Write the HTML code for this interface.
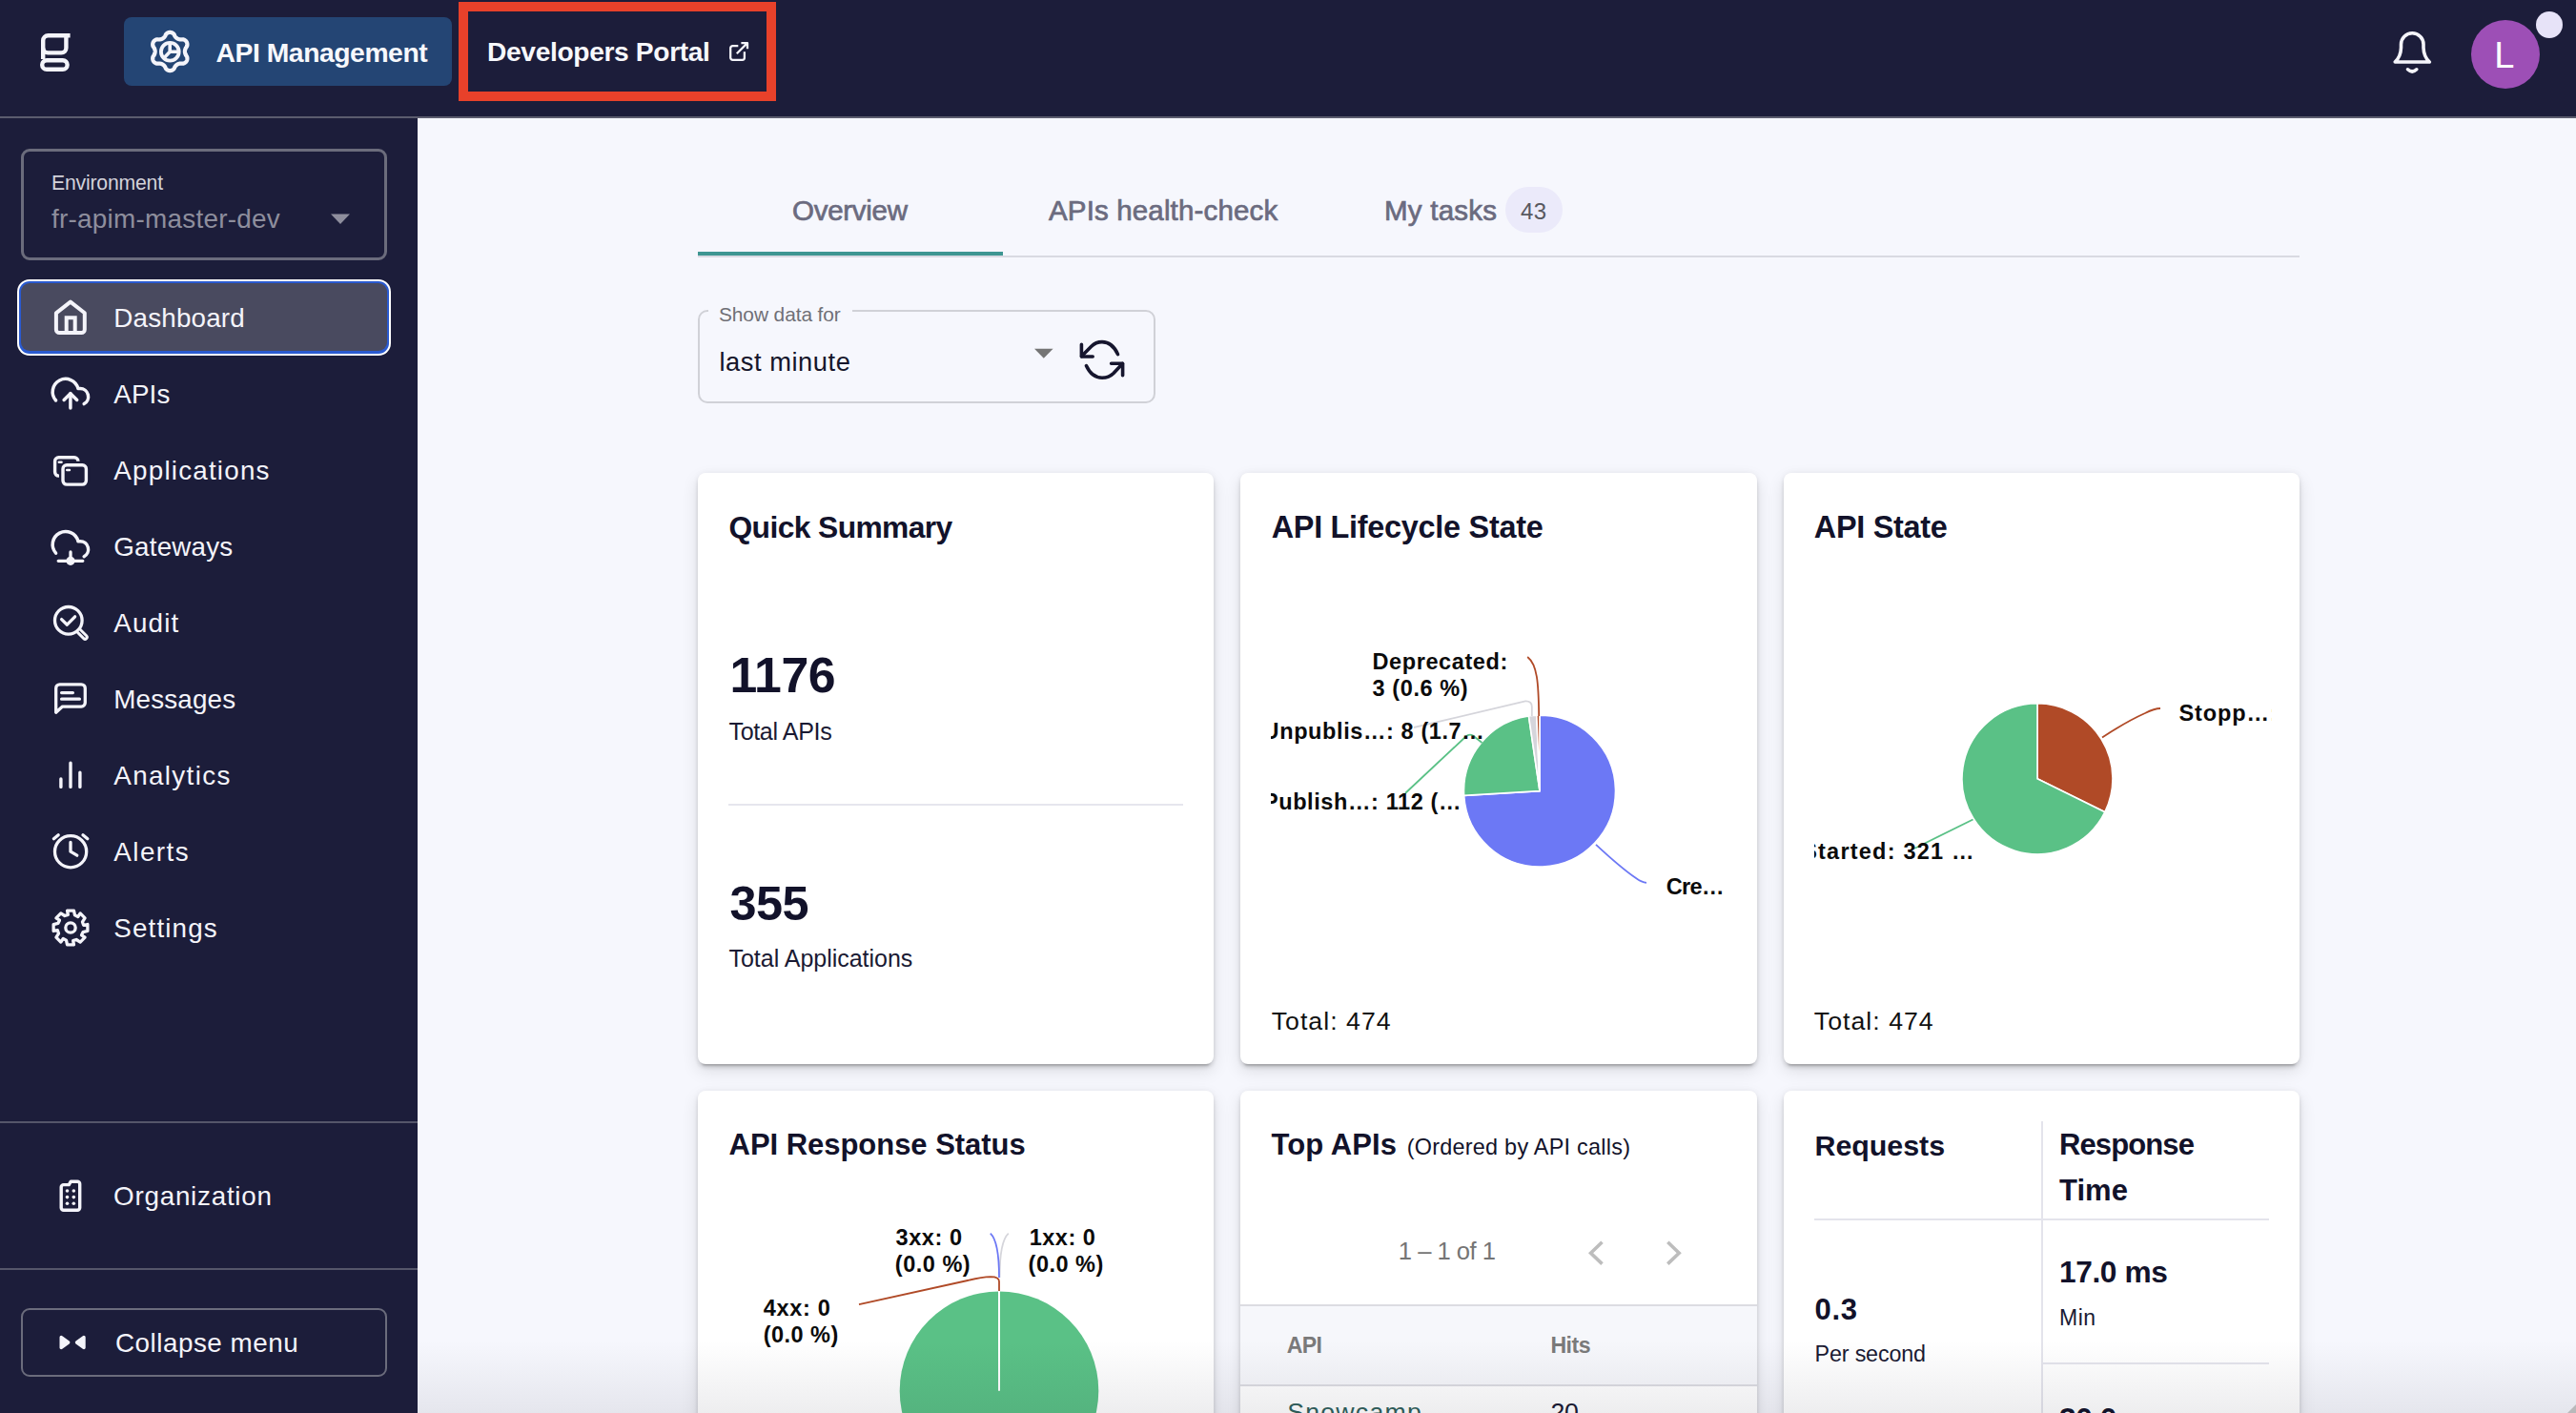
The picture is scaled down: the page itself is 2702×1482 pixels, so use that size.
<!DOCTYPE html><html><head><meta charset="utf-8"><style>
*{margin:0;padding:0;box-sizing:border-box}
html,body{width:2702px;height:1482px;overflow:hidden}
body{background:#f6f7fd;font-family:"Liberation Sans",sans-serif;position:relative}
.t{position:absolute;line-height:1;white-space:nowrap}
.a{position:absolute}
.card{position:absolute;background:#fff;border-radius:8px;box-shadow:0 6px 2px -4px rgba(0,0,0,.17),0 4px 4px 0 rgba(0,0,0,.11),0 7px 18px 0 rgba(0,0,0,.11),0 0 6px rgba(0,0,0,.05)}
</style></head><body>
<div class="a" style="left:0;top:0;width:2702px;height:122px;background:#1c1d3a"></div><div class="a" style="left:0;top:122px;width:2702px;height:2px;background:#5b5c6e"></div><div class="a" style="left:0;top:124px;width:438px;height:1358px;background:#1c1d3a"></div><div class="a" style="left:130px;top:18px;width:344px;height:72px;background:#244574;border-radius:8px"></div><div class="a" style="left:481px;top:2px;width:333px;height:104px;border:10px solid #e8412a"></div><div class="t" style="left:226.5px;top:40.8px;font-size:28.3px;font-weight:bold;color:#f7f8fc;letter-spacing:-0.45px;">API Management</div>
<div class="t" style="left:511.0px;top:39.8px;font-size:28.2px;font-weight:bold;color:#f7f8fc;letter-spacing:-0.36px;">Developers Portal</div>
<div class="a" style="left:2592px;top:21px;width:72px;height:72px;border-radius:50%;background:#9d4fb6"></div><div class="t" style="left:2616.3px;top:39.0px;font-size:38.0px;font-weight:normal;color:#ffffff;letter-spacing:0.00px;">L</div>
<div class="a" style="left:2660px;top:12px;width:28px;height:28px;border-radius:50%;background:#e7e3f8"></div><div class="a" style="left:22px;top:156px;width:384px;height:117px;border:3px solid #6b6c7c;border-radius:9px"></div><div class="t" style="left:54.0px;top:180.6px;font-size:21.2px;font-weight:normal;color:#d2d2da;letter-spacing:-0.19px;">Environment</div>
<div class="t" style="left:54.0px;top:216.4px;font-size:27.9px;font-weight:normal;color:#8e8e9d;letter-spacing:0.25px;">fr-apim-master-dev</div>
<div class="a" style="left:17.7px;top:292.7px;width:392.3px;height:80px;border-radius:13px;background:#ffffff"></div><div class="a" style="left:19.7px;top:294.7px;width:388.3px;height:76px;border-radius:11px;background:#2a5ad0"></div><div class="a" style="left:22.1px;top:297.1px;width:383.5px;height:71.2px;border-radius:9px;background:#494a5f"></div><div class="t" style="left:119.3px;top:319.8px;font-size:27.8px;font-weight:normal;color:#f4f4fa;letter-spacing:0.18px;">Dashboard</div>
<div class="t" style="left:119.3px;top:400.0px;font-size:27.8px;font-weight:normal;color:#f4f4fa;letter-spacing:0.12px;">APIs</div>
<div class="t" style="left:119.3px;top:479.5px;font-size:27.8px;font-weight:normal;color:#f4f4fa;letter-spacing:1.21px;">Applications</div>
<div class="t" style="left:119.3px;top:559.5px;font-size:27.8px;font-weight:normal;color:#f4f4fa;letter-spacing:0.19px;">Gateways</div>
<div class="t" style="left:119.3px;top:639.5px;font-size:27.8px;font-weight:normal;color:#f4f4fa;letter-spacing:1.15px;">Audit</div>
<div class="t" style="left:119.3px;top:719.5px;font-size:27.8px;font-weight:normal;color:#f4f4fa;letter-spacing:0.15px;">Messages</div>
<div class="t" style="left:119.3px;top:799.5px;font-size:27.8px;font-weight:normal;color:#f4f4fa;letter-spacing:1.35px;">Analytics</div>
<div class="t" style="left:119.3px;top:879.5px;font-size:27.8px;font-weight:normal;color:#f4f4fa;letter-spacing:1.45px;">Alerts</div>
<div class="t" style="left:119.3px;top:959.5px;font-size:27.8px;font-weight:normal;color:#f4f4fa;letter-spacing:1.14px;">Settings</div>
<div class="a" style="left:0;top:1176px;width:438px;height:2px;background:#55566a"></div><div class="t" style="left:119.1px;top:1240.9px;font-size:27.8px;font-weight:normal;color:#f4f4fa;letter-spacing:0.75px;">Organization</div>
<div class="a" style="left:0;top:1330px;width:438px;height:2px;background:#55566a"></div><div class="a" style="left:22px;top:1372px;width:384px;height:72px;border:2px solid #6b6c7c;border-radius:9px"></div><div class="t" style="left:121.0px;top:1394.5px;font-size:27.8px;font-weight:normal;color:#f4f4fa;letter-spacing:0.52px;">Collapse menu</div>
<div class="a" style="left:732px;top:268px;width:1680px;height:2px;background:#d9dae2"></div><div class="a" style="left:732px;top:264px;width:320px;height:4px;background:#3e9692"></div><div class="t" style="left:831.0px;top:205.7px;font-size:29.5px;font-weight:normal;color:#6b6b7f;letter-spacing:-0.27px;-webkit-text-stroke:0.7px #6b6b7f;">Overview</div>
<div class="t" style="left:1100.0px;top:205.7px;font-size:29.5px;font-weight:normal;color:#6b6b7f;letter-spacing:0.15px;-webkit-text-stroke:0.7px #6b6b7f;">APIs health-check</div>
<div class="t" style="left:1452.0px;top:205.7px;font-size:29.5px;font-weight:normal;color:#6b6b7f;letter-spacing:0.25px;-webkit-text-stroke:0.7px #6b6b7f;">My tasks</div>
<div class="a" style="left:1579px;top:196px;width:60px;height:48px;border-radius:24px;background:#ebeafa"></div><div class="t" style="left:1595.0px;top:209.5px;font-size:24.0px;font-weight:normal;color:#58585f;letter-spacing:0.33px;">43</div>
<div class="a" style="left:732px;top:325px;width:480px;height:98px;border:2px solid #d0d1d7;border-radius:10px"></div><div class="a" style="left:743px;top:322px;width:151px;height:6px;background:#f6f7fd"></div><div class="t" style="left:754.0px;top:319.7px;font-size:20.9px;font-weight:normal;color:#6f6f76;letter-spacing:-0.09px;">Show data for</div>
<div class="t" style="left:754.4px;top:365.5px;font-size:27.3px;font-weight:normal;color:#15152b;letter-spacing:0.55px;">last minute</div>
<div class="card" style="left:732px;top:496px;width:541px;height:620px"></div><div class="card" style="left:1301px;top:496px;width:542px;height:620px"></div><div class="card" style="left:1871px;top:496px;width:541px;height:620px"></div><div class="card" style="left:732px;top:1144px;width:541px;height:400px"></div><div class="card" style="left:1301px;top:1144px;width:542px;height:400px"></div><div class="card" style="left:1871px;top:1144px;width:541px;height:400px"></div><div class="t" style="left:764.5px;top:537.9px;font-size:31.8px;font-weight:bold;color:#12122a;letter-spacing:-0.61px;">Quick Summary</div>
<div class="t" style="left:765.4px;top:683.2px;font-size:51.8px;font-weight:bold;color:#12122a;letter-spacing:-0.36px;">1176</div>
<div class="t" style="left:764.5px;top:754.7px;font-size:25.1px;font-weight:normal;color:#1a1a33;letter-spacing:-0.37px;">Total APIs</div>
<div class="a" style="left:764px;top:843px;width:477px;height:2px;background:#e6e6ee"></div><div class="t" style="left:765.4px;top:922.6px;font-size:50.4px;font-weight:bold;color:#12122a;letter-spacing:-0.45px;">355</div>
<div class="t" style="left:764.5px;top:993.2px;font-size:25.0px;font-weight:normal;color:#1a1a33;letter-spacing:-0.02px;">Total Applications</div>
<div class="t" style="left:1333.7px;top:536.8px;font-size:32.4px;font-weight:bold;color:#12122a;letter-spacing:-0.27px;">API Lifecycle State</div>
<div class="t" style="left:1902.8px;top:536.8px;font-size:32.4px;font-weight:bold;color:#12122a;letter-spacing:-0.27px;">API State</div>
<div class="t" style="left:1333.7px;top:1057.8px;font-size:26.7px;font-weight:normal;color:#111111;letter-spacing:1.02px;">Total: 474</div>
<div class="t" style="left:1902.8px;top:1057.8px;font-size:26.7px;font-weight:normal;color:#111111;letter-spacing:1.02px;">Total: 474</div>
<div class="t" style="left:764.6px;top:1185.4px;font-size:31.0px;font-weight:bold;color:#12122a;letter-spacing:-0.04px;">API Response Status</div>
<div class="t" style="left:1333.6px;top:1185.4px;font-size:31.0px;font-weight:bold;color:#12122a;letter-spacing:0.06px;">Top APIs</div>
<div class="t" style="left:1475.7px;top:1191.9px;font-size:23.4px;font-weight:normal;color:#12122a;letter-spacing:0.26px;">(Ordered by API calls)</div>
<div class="t" style="left:1466.8px;top:1299.9px;font-size:25.6px;font-weight:normal;color:#757575;letter-spacing:-0.50px;">1 – 1 of 1</div>
<div class="a" style="left:1301px;top:1368px;width:542px;height:2px;background:#dcdce2"></div><div class="a" style="left:1301px;top:1370px;width:542px;height:82px;background:#f6f7fb"></div><div class="a" style="left:1301px;top:1452px;width:542px;height:2px;background:#dcdce2"></div><div class="t" style="left:1349.7px;top:1400.2px;font-size:23.1px;font-weight:bold;color:#7a7a7a;letter-spacing:-0.67px;">API</div>
<div class="t" style="left:1626.4px;top:1400.2px;font-size:23.1px;font-weight:bold;color:#7a7a7a;letter-spacing:-0.45px;">Hits</div>
<div class="t" style="left:1350.2px;top:1467.9px;font-size:26.7px;font-weight:normal;color:#2f5f5b;letter-spacing:1.23px;">Snowcamp</div>
<div class="t" style="left:1626.4px;top:1467.9px;font-size:26.7px;font-weight:normal;color:#1a1a33;letter-spacing:-0.34px;">20</div>
<div class="t" style="left:1903.6px;top:1186.0px;font-size:30.4px;font-weight:bold;color:#12122a;letter-spacing:-0.05px;">Requests</div>
<div class="t" style="left:2160.0px;top:1185.4px;font-size:31.0px;font-weight:bold;color:#12122a;letter-spacing:-0.89px;">Response</div>
<div class="t" style="left:2160.0px;top:1233.3px;font-size:31.0px;font-weight:bold;color:#12122a;letter-spacing:0.05px;">Time</div>
<div class="a" style="left:2141px;top:1176px;width:2px;height:310px;background:#e4e4ec"></div><div class="a" style="left:1903px;top:1278px;width:477px;height:2px;background:#e4e4ec"></div><div class="a" style="left:2143px;top:1429px;width:237px;height:2px;background:#e4e4ec"></div><div class="t" style="left:1903.6px;top:1357.6px;font-size:31.0px;font-weight:bold;color:#12122a;letter-spacing:0.64px;">0.3</div>
<div class="t" style="left:1903.6px;top:1409.0px;font-size:23.3px;font-weight:normal;color:#1a1a33;letter-spacing:-0.17px;">Per second</div>
<div class="t" style="left:2160.0px;top:1319.3px;font-size:31.7px;font-weight:bold;color:#12122a;letter-spacing:-0.40px;">17.0 ms</div>
<div class="t" style="left:2160.0px;top:1371.4px;font-size:23.0px;font-weight:normal;color:#1a1a33;letter-spacing:0.50px;">Min</div>
<div class="t" style="left:2160.0px;top:1472.6px;font-size:31.7px;font-weight:bold;color:#12122a;letter-spacing:-0.40px;">30.0 ms</div>
<svg class="a" style="left:0;top:0" width="2702" height="1482" viewBox="0 0 2702 1482"><g fill="none" stroke="#f4f4fa" stroke-linecap="round" stroke-linejoin="round"><path d="M73.6 37.2 H50.5 A5.3 5.3 0 0 0 45.2 42.5 V62" stroke-width="4.4" stroke-linecap="butt"/><path d="M45.2 50.3 A5.1 5.1 0 0 0 50.3 55.4 H64.3 A5.1 5.1 0 0 0 69.4 50.3 V37.2" stroke-width="4.4" stroke-linecap="butt"/><rect x="44.2" y="63.2" width="26.4" height="9.6" rx="4.8" stroke-width="4.4"/><polygon points="178.30,33.90 178.65,33.91 179.00,33.95 179.35,34.01 179.69,34.09 180.03,34.19 180.37,34.32 180.70,34.47 181.02,34.64 181.33,34.84 181.64,35.06 181.93,35.30 182.22,35.57 182.48,35.88 182.73,36.23 182.92,36.76 183.09,37.29 183.30,37.65 183.51,37.96 183.72,38.26 183.93,38.53 184.14,38.78 184.35,39.02 184.56,39.25 184.77,39.47 184.98,39.67 185.20,39.85 185.42,40.03 185.64,40.20 185.87,40.35 186.10,40.49 186.34,40.62 186.59,40.74 186.84,40.85 187.10,40.95 187.37,41.04 187.65,41.13 187.94,41.20 188.24,41.27 188.56,41.33 188.88,41.39 189.22,41.43 189.58,41.47 189.96,41.49 190.38,41.49 190.92,41.38 191.47,41.28 191.90,41.32 192.30,41.39 192.68,41.50 193.03,41.64 193.38,41.79 193.70,41.96 194.02,42.16 194.31,42.37 194.59,42.59 194.85,42.84 195.09,43.10 195.32,43.37 195.52,43.65 195.71,43.95 195.87,44.26 196.02,44.58 196.14,44.91 196.24,45.25 196.32,45.60 196.38,45.95 196.41,46.31 196.42,46.68 196.41,47.05 196.38,47.42 196.31,47.80 196.22,48.18 196.09,48.56 195.90,48.95 195.54,49.38 195.17,49.79 194.96,50.15 194.79,50.49 194.65,50.82 194.51,51.14 194.40,51.45 194.29,51.75 194.20,52.05 194.12,52.34 194.06,52.62 194.00,52.90 193.96,53.18 193.93,53.45 193.91,53.73 193.90,54.00 193.91,54.27 193.93,54.55 193.96,54.82 194.00,55.10 194.06,55.38 194.12,55.66 194.20,55.95 194.29,56.25 194.40,56.55 194.51,56.86 194.65,57.18 194.79,57.51 194.96,57.85 195.17,58.21 195.54,58.62 195.90,59.05 196.09,59.44 196.22,59.82 196.31,60.20 196.38,60.58 196.41,60.95 196.42,61.32 196.41,61.69 196.38,62.05 196.32,62.40 196.24,62.75 196.14,63.09 196.02,63.42 195.87,63.74 195.71,64.05 195.52,64.35 195.32,64.63 195.09,64.90 194.85,65.16 194.59,65.41 194.31,65.63 194.02,65.84 193.70,66.04 193.38,66.21 193.03,66.36 192.68,66.50 192.30,66.61 191.90,66.68 191.47,66.72 190.92,66.62 190.38,66.51 189.96,66.51 189.58,66.53 189.22,66.57 188.88,66.61 188.56,66.67 188.24,66.73 187.94,66.80 187.65,66.87 187.37,66.96 187.10,67.05 186.84,67.15 186.59,67.26 186.34,67.38 186.10,67.51 185.87,67.65 185.64,67.80 185.42,67.97 185.20,68.15 184.98,68.33 184.77,68.53 184.56,68.75 184.35,68.98 184.14,69.22 183.93,69.47 183.72,69.74 183.51,70.04 183.30,70.35 183.09,70.71 182.92,71.24 182.73,71.77 182.48,72.12 182.22,72.43 181.93,72.70 181.64,72.94 181.33,73.16 181.02,73.36 180.70,73.53 180.37,73.68 180.03,73.81 179.69,73.91 179.35,73.99 179.00,74.05 178.65,74.09 178.30,74.10 177.95,74.09 177.60,74.05 177.25,73.99 176.91,73.91 176.57,73.81 176.23,73.68 175.90,73.53 175.58,73.36 175.27,73.16 174.96,72.94 174.67,72.70 174.38,72.43 174.12,72.12 173.87,71.77 173.68,71.24 173.51,70.71 173.30,70.35 173.09,70.04 172.88,69.74 172.67,69.47 172.46,69.22 172.25,68.98 172.04,68.75 171.83,68.53 171.62,68.33 171.40,68.15 171.18,67.97 170.96,67.80 170.73,67.65 170.50,67.51 170.26,67.38 170.01,67.26 169.76,67.15 169.50,67.05 169.23,66.96 168.95,66.87 168.66,66.80 168.36,66.73 168.04,66.67 167.72,66.61 167.38,66.57 167.02,66.53 166.64,66.51 166.22,66.51 165.68,66.62 165.13,66.72 164.70,66.68 164.30,66.61 163.92,66.50 163.57,66.36 163.22,66.21 162.90,66.04 162.58,65.84 162.29,65.63 162.01,65.41 161.75,65.16 161.51,64.90 161.28,64.63 161.08,64.35 160.89,64.05 160.73,63.74 160.58,63.42 160.46,63.09 160.36,62.75 160.28,62.40 160.22,62.05 160.19,61.69 160.18,61.32 160.19,60.95 160.22,60.58 160.29,60.20 160.38,59.82 160.51,59.44 160.70,59.05 161.06,58.62 161.43,58.21 161.64,57.85 161.81,57.51 161.95,57.18 162.09,56.86 162.20,56.55 162.31,56.25 162.40,55.95 162.48,55.66 162.54,55.38 162.60,55.10 162.64,54.82 162.67,54.55 162.69,54.27 162.70,54.00 162.69,53.73 162.67,53.45 162.64,53.18 162.60,52.90 162.54,52.62 162.48,52.34 162.40,52.05 162.31,51.75 162.20,51.45 162.09,51.14 161.95,50.82 161.81,50.49 161.64,50.15 161.43,49.79 161.06,49.38 160.70,48.95 160.51,48.56 160.38,48.18 160.29,47.80 160.22,47.42 160.19,47.05 160.18,46.68 160.19,46.31 160.22,45.95 160.28,45.60 160.36,45.25 160.46,44.91 160.58,44.58 160.73,44.26 160.89,43.95 161.08,43.65 161.28,43.37 161.51,43.10 161.75,42.84 162.01,42.59 162.29,42.37 162.58,42.16 162.90,41.96 163.22,41.79 163.57,41.64 163.92,41.50 164.30,41.39 164.70,41.32 165.13,41.28 165.68,41.38 166.22,41.49 166.64,41.49 167.02,41.47 167.38,41.43 167.72,41.39 168.04,41.33 168.36,41.27 168.66,41.20 168.95,41.13 169.23,41.04 169.50,40.95 169.76,40.85 170.01,40.74 170.26,40.62 170.50,40.49 170.73,40.35 170.96,40.20 171.18,40.03 171.40,39.85 171.62,39.67 171.83,39.47 172.04,39.25 172.25,39.02 172.46,38.78 172.67,38.53 172.88,38.26 173.09,37.96 173.30,37.65 173.51,37.29 173.68,36.76 173.87,36.23 174.12,35.88 174.38,35.57 174.67,35.30 174.96,35.06 175.27,34.84 175.58,34.64 175.90,34.47 176.23,34.32 176.57,34.19 176.91,34.09 177.25,34.01 177.60,33.95 177.95,33.91" stroke-width="4.2"/><circle cx="178.3" cy="54.3" r="9.4" stroke-width="3.8"/><path d="M178.2 45.5 V54.3 H187 M178.2 54.3 L172.3 60.5" stroke-width="3.6" stroke-linecap="butt"/><path d="M774.3 48.2 H768.5 A2.3 2.3 0 0 0 766.2 50.5 V60.6 A2.3 2.3 0 0 0 768.5 62.9 H778.6 A2.3 2.3 0 0 0 780.9 60.6 V54.3" stroke-width="2.3" stroke-linecap="butt"/><path d="M772.8 56.2 L783.4 45.6 M777.4 45.2 H784 V51.3" stroke-width="2.3" stroke-linecap="butt"/><path d="M2512.2 65 Q2518.2 59.5 2518.5 50 V46.5 A11.75 11.75 0 0 1 2542 46.5 V50 Q2542.3 59.5 2548.3 65 Z" stroke-width="3.6"/><path d="M2525.5 72.8 Q2530.2 77.2 2534.8 72.8" stroke-width="3.6"/><path d="M58.9 328.3 L73.9 316.6 L88.8 328.3 V345.7 A3.4 3.4 0 0 1 85.4 349.1 H62.3 A3.4 3.4 0 0 1 58.9 345.7 Z" stroke-width="4"/><path d="M69.7 349 V333.2 H78.7 V349" stroke-width="4" stroke-linejoin="miter"/><g transform="translate(53.5 392.3) scale(1.7)" stroke-width="2.05"><polyline points="16 16 12 12 8 16"/><line x1="12" y1="12" x2="12" y2="21"/><path d="M20.39 18.39A5 5 0 0 0 18 9h-1.26A8 8 0 1 0 3 16.3"/></g><rect x="57.6" y="479.8" width="24.3" height="19.3" rx="4" stroke-width="3.4"/><rect x="66" y="487.8" width="24.4" height="20.3" rx="4" stroke="#1c1d3a" stroke-width="8" fill="#1c1d3a"/><rect x="66" y="487.8" width="24.4" height="20.3" rx="4" stroke-width="3.4"/><path d="M61.8 484.8 H64.6 M70.2 493 H73" stroke-width="2.4"/><g transform="translate(53.5 552.4) scale(1.7)" stroke-width="2.05"><path d="M20.39 18.39A5 5 0 0 0 18 9h-1.26A8 8 0 1 0 3 16.3"/></g><path d="M74 579 V586 M61.2 588.3 H86.8" stroke-width="3.3"/><circle cx="74" cy="588.3" r="4.6" fill="#f4f4fa" stroke="none"/><circle cx="71.8" cy="650.8" r="14.3" stroke-width="3.3"/><path d="M83.2 662.2 L89.2 668.2" stroke-width="7"/><path d="M83.2 662.2 L89.2 668.2" stroke="#1c1d3a" stroke-width="1.2"/><path d="M64.6 649.6 L70.4 655.2 L78.6 646.8" stroke-width="3.3"/><path d="M58.7 747.2 V721.8 A4 4 0 0 1 62.7 717.8 H85.3 A4 4 0 0 1 89.3 721.8 V737.1 A4 4 0 0 1 85.3 741.1 H65.5 Z" stroke-width="3.3"/><path d="M64.6 726.6 H76.4 M64.6 733.2 H83.4" stroke-width="3.3"/><path d="M63.9 816.9 V825.4 M74 800.2 V825.4 M83.9 810.3 V825.4" stroke-width="3.4"/><circle cx="74.1" cy="893.2" r="16.6" stroke-width="3.3"/><path d="M74 883.5 V893.2 L80.8 897.2 M56.4 879.7 L61.2 875.7 M87 875.7 L91.8 879.7" stroke-width="3.3"/><polygon points="70.53,955.13 77.47,955.13 78.53,959.86 81.77,961.48 84.18,957.91 89.09,962.82 86.49,966.91 87.64,970.35 91.87,969.53 91.87,976.47 87.14,977.53 85.52,980.77 89.09,983.18 84.18,988.09 80.09,985.49 76.65,986.64 77.47,990.87 70.53,990.87 69.47,986.14 66.23,984.52 63.82,988.09 58.91,983.18 61.51,979.09 60.36,975.65 56.13,976.47 56.13,969.53 60.86,968.47 62.48,965.23 58.91,962.82 63.82,957.91 67.91,960.51 71.35,959.36" stroke-width="3.3"/><circle cx="74" cy="973" r="5.2" stroke-width="3.3"/><path d="M66.7 1242.6 H72.3 L74.3 1239.2 H81.2 A2.5 2.5 0 0 1 83.7 1241.7 V1266.8 A2.5 2.5 0 0 1 81.2 1269.3 H66.7 A2.5 2.5 0 0 1 64.2 1266.8 V1245.1 A2.5 2.5 0 0 1 66.7 1242.6 Z" stroke-width="3.4"/><circle cx="70.5" cy="1249" r="1.8" fill="#f4f4fa" stroke="none"/><circle cx="77.3" cy="1249" r="1.8" fill="#f4f4fa" stroke="none"/><circle cx="70.5" cy="1255.6" r="1.8" fill="#f4f4fa" stroke="none"/><circle cx="77.3" cy="1255.6" r="1.8" fill="#f4f4fa" stroke="none"/><circle cx="70.5" cy="1262.3" r="1.8" fill="#f4f4fa" stroke="none"/><circle cx="77.3" cy="1262.3" r="1.8" fill="#f4f4fa" stroke="none"/><path d="M64.3 1402.6 L71.6 1408 L64.3 1413.4 Z M87.9 1402.6 L80.6 1408 L87.9 1413.4 Z" fill="#f4f4fa" stroke-width="3.6"/></g><polygon points="347,224.6 367,224.6 357,235" fill="#8e8e9d"/><polygon points="1085,365.8 1104.6,365.8 1094.8,375.8" fill="#757575"/><g fill="none" stroke="#16162e" stroke-width="3.6" stroke-linecap="round" stroke-linejoin="round"><path d="M1172.5 371.6 C1168.5 362.5 1162.5 358.6 1156 358.6 C1151 358.6 1147.5 360.4 1144.5 363.4 L1134.6 373.6"/><path d="M1134.4 361.2 V374 H1146.2"/><path d="M1139.4 383.6 C1143.2 392 1149 396.2 1156 396.2 C1161 396.2 1165 394.4 1168 391.4 L1177.4 381.4"/><path d="M1165.6 381.2 H1177.6 V393.8"/></g><path d="M1680.5 1302.8 L1668.6 1314.2 L1680.5 1325.6 M1749.3 1302.8 L1761.2 1314.2 L1749.3 1325.6" fill="none" stroke="#bdbdbd" stroke-width="3.6"/><path d="M1615.00 829.60 L1615.00 750.10 A79.5 79.5 0 1 1 1535.64 834.34 Z" fill="#6c78f5" stroke="#fff" stroke-width="1.6" stroke-linejoin="round"/><path d="M1615.00 829.60 L1535.64 834.34 A79.5 79.5 0 0 1 1603.45 750.94 Z" fill="#5ac186" stroke="#fff" stroke-width="1.6" stroke-linejoin="round"/><path d="M1615.00 829.60 L1603.45 750.94 A79.5 79.5 0 0 1 1611.84 750.16 Z" fill="#d5d5db" stroke="#fff" stroke-width="1.6" stroke-linejoin="round"/><path d="M1615.00 829.60 L1611.84 750.16 A79.5 79.5 0 0 1 1615.00 750.10 Z" fill="#b04a27" stroke="#fff" stroke-width="1.6" stroke-linejoin="round"/><g fill="none" stroke-width="1.8"><path d="M1614.2 751 C1613.8 716 1612.5 697 1602.2 689" stroke="#b04a27"/><path d="M1606.8 751 V741 Q1606.8 735.2 1600 735.4 L1483 763" stroke="#d5d5db"/><path d="M1554.5 779 L1545 771.5 Q1541 769.5 1537.5 772.5 L1474 832" stroke="#5ac186"/><path d="M1674 885.8 Q1700 910 1716 921 Q1722 925.5 1727 925.8" stroke="#6c78f5"/></g><path d="M2137.00 816.80 L2137.00 737.80 A79 79 0 0 1 2207.88 851.68 Z" fill="#b04a27" stroke="#fff" stroke-width="1.6"/><path d="M2137.00 816.80 L2207.88 851.68 A79 79 0 1 1 2137.00 737.80 Z" fill="#5ac186" stroke="#fff" stroke-width="1.6"/><g fill="none" stroke-width="1.8"><path d="M2205 773.5 Q2230 757 2250 748 Q2260 743 2266 743" stroke="#b04a27"/><path d="M2069.5 859.5 L2010 889 Q2007 890 2005 890" stroke="#5ac186"/></g><circle cx="1048" cy="1458.7" r="104.3" fill="#5ac186"/><path d="M1048 1354 V1458.7" stroke="#fff" stroke-width="2"/><g fill="none" stroke-width="1.8"><path d="M1048.5 1340 Q1048.5 1302 1057.8 1293.6" stroke="#d5d5db"/><path d="M1048 1340 Q1048 1302 1038.8 1293.6" stroke="#6c78f5"/><path d="M1048 1354 V1344 Q1048 1339.2 1039 1339.2 Q1030 1339.5 1015 1343 L901 1368.2" stroke="#b04a27"/></g></svg><div class="a" style="left:1333px;top:600px;width:478px;height:400px;overflow:hidden"><div class="t" style="left:106.5px;top:83.1px;font-size:23.5px;font-weight:bold;color:#0b0b0b;letter-spacing:0.60px;">Deprecated:</div>
<div class="t" style="left:106.5px;top:110.8px;font-size:23.5px;font-weight:bold;color:#0b0b0b;letter-spacing:0.60px;">3 (0.6 %)</div>
<div class="t" style="left:-8.4px;top:155.9px;font-size:23.5px;font-weight:bold;color:#0b0b0b;letter-spacing:0.60px;">Unpublis…: 8 (1.7…</div>
<div class="t" style="left:-8.1px;top:230.4px;font-size:23.5px;font-weight:bold;color:#0b0b0b;letter-spacing:0.60px;">Publish…: 112 (…</div>
<div class="t" style="left:414.7px;top:318.8px;font-size:23.5px;font-weight:bold;color:#0b0b0b;letter-spacing:-0.63px;">Cre…</div>
</div><div class="a" style="left:1903px;top:600px;width:480px;height:400px;overflow:hidden"><div class="t" style="left:382.5px;top:137.1px;font-size:23.5px;font-weight:bold;color:#0b0b0b;letter-spacing:0.90px;">Stopp…:</div>
<div class="t" style="left:-12.8px;top:282.1px;font-size:23.5px;font-weight:bold;color:#0b0b0b;letter-spacing:1.21px;">Started: 321 …</div>
</div><div class="t" style="left:939.5px;top:1287.0px;font-size:23.5px;font-weight:bold;color:#0b0b0b;letter-spacing:0.61px;">3xx: 0</div>
<div class="t" style="left:938.8px;top:1314.7px;font-size:23.5px;font-weight:bold;color:#0b0b0b;letter-spacing:0.52px;">(0.0 %)</div>
<div class="t" style="left:1079.7px;top:1287.0px;font-size:23.5px;font-weight:bold;color:#0b0b0b;letter-spacing:0.51px;">1xx: 0</div>
<div class="t" style="left:1078.6px;top:1314.7px;font-size:23.5px;font-weight:bold;color:#0b0b0b;letter-spacing:0.49px;">(0.0 %)</div>
<div class="t" style="left:800.7px;top:1361.3px;font-size:23.5px;font-weight:bold;color:#0b0b0b;letter-spacing:0.71px;">4xx: 0</div>
<div class="t" style="left:800.7px;top:1389.0px;font-size:23.5px;font-weight:bold;color:#0b0b0b;letter-spacing:0.47px;">(0.0 %)</div>
<div class="a" style="left:438px;top:1406px;width:2264px;height:76px;background:linear-gradient(to bottom,rgba(20,20,40,0),rgba(20,20,40,.075))"></div><svg class="a" style="left:2690px;top:1470px" width="12" height="12"><path d="M12 3 L12 12 L3 12 Z" fill="#b9b9bb"/></svg></body></html>
